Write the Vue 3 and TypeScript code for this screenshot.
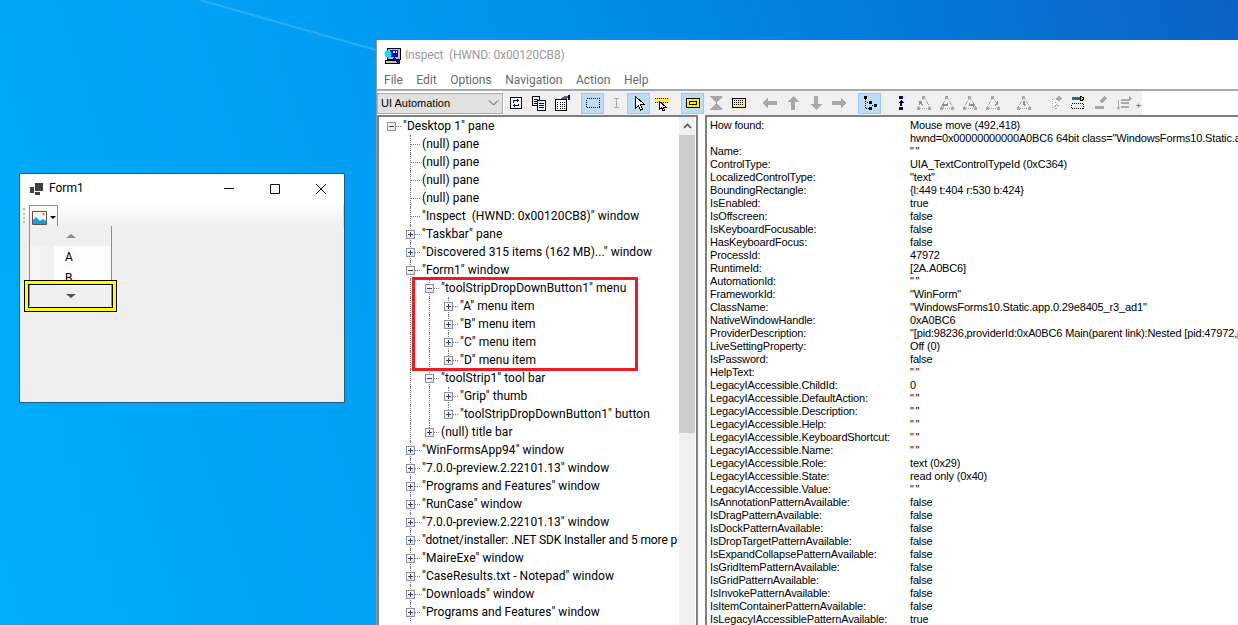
<template>
  <div class="desktop">
    <svg class="beam" width="400" height="60" viewBox="0 0 400 60">
      <path d="M200 0 L376 50" stroke="#4dbcf8" stroke-opacity="0.55" stroke-width="2" fill="none" />
    </svg>

    <div class="form-window">
      <div class="form-title">
        <svg class="form-icon" width="13" height="12" viewBox="0 0 13 12">
          <path d="M5 0h8v8H5z" fill="#3f3f3f" />
          <path d="M0 4h4v6H0z" fill="#3f3f3f" />
          <path d="M5 9h5v3H5z" fill="#3f3f3f" />
        </svg>
        <span class="form-name">Form1</span>
        <div class="caption-btns">
          <svg width="46" height="12" viewBox="0 0 46 12"><path d="M18 5.5h10" stroke="#111" /></svg>
          <svg width="46" height="12" viewBox="0 0 46 12"><path d="M18.5 1.5h9v9h-9z" stroke="#111" fill="none" /></svg>
          <svg width="46" height="12" viewBox="0 0 46 12"><path d="M18 1l10 10M28 1L18 11" stroke="#111" fill="none" /></svg>
        </div>
      </div>
      <div class="form-toolbar">
        <span class="grip"></span>
        <div class="drop-btn">
          <svg width="15" height="14" viewBox="0 0 15 14">
            <path d="M.5.5h14v13H.5z" fill="#f4f4f4" stroke="#555" />
            <path d="M1 13V9l3-3 4 4 3-2 3 2v3z" fill="#1d9be0" />
            <path d="M10 3h3M11.500 1.500v3" stroke="#e08a1e" />
          </svg>
          <span class="drop-arrow"></span>
        </div>
      </div>
      <div class="form-body"></div>

      <div class="menu">
        <div class="menu-scroll"><span class="tri-up"></span></div>
        <div class="menu-items">
          <div class="menu-item">A</div>
          <div class="menu-item">B</div>
        </div>
        <div class="menu-scroll"><span class="tri-down"></span></div>
      </div>
      <div class="hilite"></div>
    </div>

    <div class="inspect">
      <div class="ins-title">
        <svg width="17" height="17" viewBox="0 0 17 17" shape-rendering="crispEdges">
          <path d="M3 1h13v11H3z" fill="#c0c0c0" stroke="#000" />
          <path d="M6 3h8v7H6z" fill="#0000e0" />
          <path d="M9 4h2v2H9zM12 4h1v2h-1z" fill="#fff" />
          <path d="M1 13h14v3H1z" fill="#c0c0c0" stroke="#000" />
          <circle cx="4" cy="7" r="3.500" fill="#00e8f0" shape-rendering="auto" />
          <path d="M10 11l5 5" stroke="#0000e0" stroke-width="2" />
        </svg>
        <span>Inspect&nbsp; (HWND: 0x00120CB8)</span>
      </div>
      <div class="ins-menu">
        <span v-for="m in menus" :key="m">{{ m }}</span>
      </div>
      <div class="ins-tools">
        <div class="combo">
          <span>UI Automation</span>
          <svg width="11" height="6" viewBox="0 0 11 6"><path d="M1 .5l4.500 4.500L10 .5" stroke="#555" fill="none" /></svg>
        </div>
        <div class="tool-strip">
          <template v-for="(t, i) in tools" :key="i">
            <span v-if="t === '|'" class="tool-sep"></span>
            <span v-else class="tool" :class="{ on: selected.includes(t) }">
              <svg width="16" height="16" viewBox="0 0 16 16" shape-rendering="crispEdges">
                <path
                  v-for="(s, j) in icons[t]"
                  :key="j"
                  :d="s[0]"
                  :fill="s[1] || 'none'"
                  :stroke="s[2] || 'none'"
                  :stroke-dasharray="s[3]"
                />
              </svg>
            </span>
          </template>
          <span class="tool-more">+</span>
        </div>
      </div>

      <div class="panes">
        <div class="tree-pane">
          <div class="tree">
            <div v-for="(r, i) in rows" :key="i" class="row">
              <span
                v-for="g in r.guides"
                :key="g.x"
                class="vguide"
                :class="{ half: g.half }"
                :style="{ left: g.x + 'px' }"
              ></span>
              <span class="hguide" :style="{ left: r.cx + 'px' }"></span>
              <span
                v-if="r.exp"
                class="box"
                :class="{ plus: r.exp === '+' }"
                :style="{ left: r.cx - 4 + 'px' }"
              ></span>
              <span class="label" :class="{ tight: r.text.length > 45 }" :style="{ left: r.cx + 12 + 'px' }">{{ r.text }}</span>
            </div>
            <div class="red-box"></div>
          </div>
          <div class="vscroll">
            <div class="vs-btn">
              <svg width="9" height="6" viewBox="0 0 9 6"><path d="M1 5l3.500-3.500L8 5" stroke="#505050" stroke-width="1.600" fill="none" /></svg>
            </div>
            <div class="vs-thumb"></div>
          </div>
        </div>
        <div class="details">
          <div v-for="(d, i) in details" :key="i" class="d-row">
            <span>{{ d[0] }}</span>
            <span :class="{ empty: d[1] === '\u0022\u0022' }">{{ d[1] }}</span>
          </div>
        </div>
      </div>
    </div>
  </div>
</template>

<script setup lang="ts">
type Shape = [string, string?, string?, string?]

const menus = ['File', 'Edit', 'Options', 'Navigation', 'Action', 'Help']

const G = '#a8a8a8'

function triIcon(arrow: string): Shape[] {
  return [
    ['M6 1h3v3H6zM1 12h3v3H1zM12 12h3v3h-3z', G],
    ['M6.500 4L2.500 12M9.500 4l4 8M4 13.500h8', undefined, G, '1 1'],
    [arrow, '#909090'],
  ]
}

const icons: Record<string, Shape[]> = {
  refresh: [
    ['M2.500 2.500h11v11h-11z', '#fff', '#000'],
    ['M5.500 7.500v-2h4', undefined, '#0000a0'],
    ['M9 3.500l2 2-2 2z', '#0000a0'],
    ['M10.500 8.500v2h-4', undefined, '#0000a0'],
    ['M7 8.500l-2 2 2 2z', '#0000a0'],
  ],
  copy: [
    ['M1.500 1.500h7v9h-7z', '#fff', '#000'],
    ['M3 4h4M3 6h4M3 8h4', undefined, '#000'],
    ['M6.500 5.500h8v10h-8z', '#fff', '#000080'],
    ['M8 8h5M8 10h5M8 12h5', undefined, '#000080'],
  ],
  props: [
    ['M1.500 4.500h11v11h-11z', '#fff', '#000'],
    ['M3 7h2M6 7h5M3 9h2M6 9h5M3 11h2M6 11h5M3 13h2M6 13h5', undefined, '#000', '1 1'],
    ['M6 4l5-3h3v2l-3 1z', '#606060'],
    ['M14 0h2v5h-2z', '#000080'],
  ],
  dash: [['M1.500 3.500h13v9h-13z', 'none', '#000', '1 1']],
  ibeam: [['M5.500 3.500h5M8 3.500v9M5.500 12.500h5', undefined, G]],
  cursor: [['M4.500 1.500v12l3-3 2 4.500 2-1-2-4.500h4z', '#fff', '#000']],
  watch: [
    ['M1 3h14v5H1z', '#ffe85c'],
    ['M1 3.500h14M1 7.500h14', undefined, '#000', '1 1'],
    ['M5.500 6.500v8l2-2 1.500 3 1.500-.5-1.500-3h3z', '#fff', '#000'],
  ],
  rect: [
    ['M1 3h14v10H1z', '#000'],
    ['M2 4h12v8H2z', '#ffee00'],
    ['M4 6h8v4H4z', '#000'],
    ['M5 7h6v2H5z', '#ffee00'],
  ],
  hour: [
    ['M2 1h12v1l-6 6-6-6z', G],
    ['M8 8l6 6v1H2v-1z', G],
  ],
  keys: [
    ['M1.500 3.500h13v9h-13z', '#ffee66', '#000'],
    ['M3 5.500h10M3 7.500h10M3 9.500h10', undefined, '#000', '1 1'],
  ],
  left: [['M1 8l5-6v4h9v4H6v4z', G]],
  up: [['M8 1l6 6h-4v8H6V7H2z', G]],
  down: [['M8 15l6-6h-4V1H6v8H2z', G]],
  right: [['M15 8L10 2v4H1v4h9v4z', G]],
  tree: [
    ['M2 1h3v3H2zM7 6h3v3H7zM12 9h3v3h-3zM7 12h3v3H7z', '#000'],
    ['M3.500 4v9.500H7M5 7.500h2M10 10.500h2', undefined, '#000', '1 1'],
  ],
  nav: [
    ['M6 1h4v3H6zM6 12h4v3H6z', '#000080'],
    ['M8 5l3 3H9v3H7V8H5z', '#000'],
  ],
  t1: triIcon('M3 6l3 1-1 1 2 2-1 1-2-2-1 1z'),
  t2: triIcon('M2 10l3-2v1h3V8h1v3H5v1z'),
  t3: triIcon('M14 10l-3-2v1H8V8H7v3h4v1z'),
  t4: triIcon('M13 6l-3 1 1 1-2 2 1 1 2-2 1 1z'),
  t5: triIcon('M8 11l-2-2h1V6h2v3h1z'),
  star: [
    ['M5 4v9l2-2 1.500 3 1-.5L8 10.500h3z', '#fff', G, '1 1'],
    ['M8 4l4-3 3 2-3 3z', G],
  ],
  tag: [
    ['M2 2h8v3H2z', '#008080'],
    ['M10 1l4 2-2 3-2-1z', '#ffee00', '#000'],
    ['M1.500 8.500h12v5h-12z', 'none', '#000', '1 1'],
  ],
  lift: [
    ['M2 11h9v3H2z', G],
    ['M6 6l5-5 2 1 1 2-5 4z', G],
  ],
  list: [
    ['M5 4h8v2H5zM5 7h8v2H5zM5 11h8v2H5z', G],
    ['M13 1l3 2-3 3z', G],
    ['M2.500 5v9M1 12l1.500 2L4 12', undefined, G],
  ],
}

const tools = [
  'refresh', 'copy', 'props', '|',
  'dash', 'ibeam', 'cursor', 'watch', '|',
  'rect', 'hour', 'keys', '|',
  'left', 'up', 'down', 'right', '|',
  'tree', '|',
  'nav', 't1', 't2', 't3', 't4', '|',
  't5', '|',
  'star', 'tag', 'lift', 'list',
]
const selected = ['dash', 'cursor', 'rect', 'tree']

// depth, expander, text
const treeData: [number, string, string][] = [
  [0, '-', '"Desktop 1" pane'],
  [1, '', '(null) pane'],
  [1, '', '(null) pane'],
  [1, '', '(null) pane'],
  [1, '', '(null) pane'],
  [1, '', '"Inspect  (HWND: 0x00120CB8)" window'],
  [1, '+', '"Taskbar" pane'],
  [1, '+', '"Discovered 315 items (162 MB)..." window'],
  [1, '-', '"Form1" window'],
  [2, '-', '"toolStripDropDownButton1" menu'],
  [3, '+', '"A" menu item'],
  [3, '+', '"B" menu item'],
  [3, '+', '"C" menu item'],
  [3, '+', '"D" menu item'],
  [2, '-', '"toolStrip1" tool bar'],
  [3, '+', '"Grip" thumb'],
  [3, '+', '"toolStripDropDownButton1" button'],
  [2, '+', '(null) title bar'],
  [1, '+', '"WinFormsApp94" window'],
  [1, '+', '"7.0.0-preview.2.22101.13" window'],
  [1, '+', '"Programs and Features" window'],
  [1, '+', '"RunCase" window'],
  [1, '+', '"7.0.0-preview.2.22101.13" window'],
  [1, '+', '"dotnet/installer: .NET SDK Installer and 5 more p'],
  [1, '+', '"MaireExe" window'],
  [1, '+', '"CaseResults.txt - Notepad" window'],
  [1, '+', '"Downloads" window'],
  [1, '+', '"Programs and Features" window'],
]

function colX(depth: number) {
  return 12 + depth * 19
}

function continues(i: number, d: number) {
  for (let k = i + 1; k < treeData.length; k++) {
    if (treeData[k][0] === d) return true
    if (treeData[k][0] < d) return false
  }
  // the top level list goes on below the window
  return d === 1
}

const rows = treeData.map(([depth, exp, text], i) => {
  const guides: { x: number; half: boolean }[] = []
  for (let d = 1; d <= depth; d++) {
    if (d === depth) guides.push({ x: colX(d), half: !continues(i, d) })
    else if (continues(i, d)) guides.push({ x: colX(d), half: false })
  }
  return { cx: colX(depth), exp, text, guides }
})

const details: [string, string][] = [
  ['How found:', 'Mouse move (492,418)'],
  ['', 'hwnd=0x00000000000A0BC6 64bit class="WindowsForms10.Static.app.0.29e8405_r3_ad1"'],
  ['Name:', '""'],
  ['ControlType:', 'UIA_TextControlTypeId (0xC364)'],
  ['LocalizedControlType:', '"text"'],
  ['BoundingRectangle:', '{l:449 t:404 r:530 b:424}'],
  ['IsEnabled:', 'true'],
  ['IsOffscreen:', 'false'],
  ['IsKeyboardFocusable:', 'false'],
  ['HasKeyboardFocus:', 'false'],
  ['ProcessId:', '47972'],
  ['RuntimeId:', '[2A.A0BC6]'],
  ['AutomationId:', '""'],
  ['FrameworkId:', '"WinForm"'],
  ['ClassName:', '"WindowsForms10.Static.app.0.29e8405_r3_ad1"'],
  ['NativeWindowHandle:', '0xA0BC6'],
  ['ProviderDescription:', '"[pid:98236,providerId:0xA0BC6 Main(parent link):Nested [pid:47972,providerId:0xA0BC6]"'],
  ['LiveSettingProperty:', 'Off (0)'],
  ['IsPassword:', 'false'],
  ['HelpText:', '""'],
  ['LegacyIAccessible.ChildId:', '0'],
  ['LegacyIAccessible.DefaultAction:', '""'],
  ['LegacyIAccessible.Description:', '""'],
  ['LegacyIAccessible.Help:', '""'],
  ['LegacyIAccessible.KeyboardShortcut:', '""'],
  ['LegacyIAccessible.Name:', '""'],
  ['LegacyIAccessible.Role:', 'text (0x29)'],
  ['LegacyIAccessible.State:', 'read only (0x40)'],
  ['LegacyIAccessible.Value:', '""'],
  ['IsAnnotationPatternAvailable:', 'false'],
  ['IsDragPatternAvailable:', 'false'],
  ['IsDockPatternAvailable:', 'false'],
  ['IsDropTargetPatternAvailable:', 'false'],
  ['IsExpandCollapsePatternAvailable:', 'false'],
  ['IsGridItemPatternAvailable:', 'false'],
  ['IsGridPatternAvailable:', 'false'],
  ['IsInvokePatternAvailable:', 'false'],
  ['IsItemContainerPatternAvailable:', 'false'],
  ['IsLegacyIAccessiblePatternAvailable:', 'true'],
]
</script>

<style>
html,
body {
  margin: 0;
  overflow: hidden;
}
</style>

<style scoped>
.desktop {
  position: relative;
  width: 1238px;
  height: 625px;
  overflow: hidden;
  background: linear-gradient(72deg, #00aefc 0%, #009ef4 35%, #0088e4 62%, #0b62c4 100%);
  font-family: Roboto, "Open Sans", sans-serif;
  color: #000;
}

.beam {
  position: absolute;
  left: 0;
  top: 0;
}

/* Form1 */
.form-window {
  position: absolute;
  left: 19px;
  top: 173px;
  width: 326px;
  height: 230px;
  box-sizing: border-box;
  border: 1px solid #1d5c85;
  background: #efefef;
  display: flex;
  flex-direction: column;
}

.form-title {
  height: 30px;
  background: #fff;
  display: flex;
  align-items: center;
  flex-shrink: 0;
}

.form-icon {
  margin-left: 10px;
}

.form-name {
  margin-left: 6px;
  margin-bottom: 2px;
  font-size: 12px;
}

.caption-btns {
  margin-left: auto;
  display: flex;
}

.form-toolbar {
  height: 23px;
  flex-shrink: 0;
  background: linear-gradient(#fff, #efefef);
  border-right: 1px solid #dcdcdc;
  display: flex;
  align-items: flex-start;
}

.grip {
  width: 0;
  height: 15px;
  margin: 4px 0 0 3px;
  border-left: 2px dotted #c0c0c0;
}

.drop-btn {
  box-sizing: border-box;
  width: 29px;
  height: 22px;
  margin: 1px 0 0 4px;
  border: 1px solid #8c8c8c;
  border-bottom: 0;
  display: flex;
  align-items: center;
  padding: 2px 0 0 2px;
  gap: 3px;
}

.drop-arrow {
  width: 0;
  height: 0;
  border: 3px solid transparent;
  border-top: 3px solid #000;
  border-bottom: 0;
}

.form-body {
  flex: 1;
}

.menu {
  position: absolute;
  left: 9px;
  top: 52px;
  width: 83px;
  height: 80px;
  box-sizing: border-box;
  border: 1px solid #8c8c8c;
  border-width: 0 1px;
  background: #efefef;
  display: flex;
  flex-direction: column;
}

.menu-scroll {
  height: 20px;
  display: flex;
  align-items: center;
  justify-content: center;
  flex-shrink: 0;
}

.tri-up,
.tri-down {
  width: 0;
  height: 0;
  border: 5px solid transparent;
}

.tri-up {
  border-bottom: 4px solid #8c8c8c;
  border-top: 0;
}

.tri-down {
  border-top: 4px solid #505050;
  border-bottom: 0;
}

.menu-items {
  flex: 1;
  overflow: hidden;
  background: linear-gradient(90deg, #f6f6f6 0, #f0f0f0 24px, #fcfcfc 24px);
  padding-top: 1px;
}

.menu-item {
  height: 21px;
  line-height: 21px;
  padding-left: 35px;
  font-size: 12px;
}

.hilite {
  position: absolute;
  left: 4px;
  top: 106px;
  width: 93px;
  height: 32px;
  box-sizing: border-box;
  border: 1px solid #000;
  outline: 3px solid #ffff00;
  outline-offset: -4px;
}

.hilite::after {
  content: "";
  position: absolute;
  inset: 3px;
  border: 1px solid #000;
}

/* Inspect */
.inspect {
  position: absolute;
  left: 376px;
  top: 40px;
  width: 862px;
  height: 585px;
  box-sizing: border-box;
  border-left: 1px solid #8a9aa6;
  background: #fff;
  display: flex;
  flex-direction: column;
}

.ins-title {
  height: 30px;
  display: flex;
  align-items: center;
  padding-left: 7px;
  gap: 4px;
  font-size: 12px;
  letter-spacing: -0.15px;
  color: #9a9a9a;
}

.ins-menu {
  height: 19px;
  display: flex;
  align-items: center;
  gap: 13.5px;
  padding-left: 7px;
  font-size: 12px;
  color: #6a6a6a;
  border-bottom: 2px solid #a8a8a8;
}

.ins-tools {
  height: 24px;
  display: flex;
  align-items: center;
}

.combo {
  box-sizing: border-box;
  width: 126px;
  height: 21px;
  background: #e1e1e1;
  border: 1px solid #adadad;
  display: flex;
  align-items: center;
  justify-content: space-between;
  padding: 0 3px;
  font-family: "Liberation Sans", Arial, sans-serif;
  font-size: 11px;
}

.tool-strip {
  margin-left: 1px;
  height: 24px;
  width: 638px;
  background: #f0f0f0;
  display: flex;
  align-items: center;
}

.tool {
  box-sizing: border-box;
  width: 23px;
  height: 21px;
  display: flex;
  align-items: center;
  justify-content: center;
  flex-shrink: 0;
}

.tool.on {
  background: #bddcf5;
  border: 1px solid #94cbf7;
}

.tool-sep {
  width: 8px;
  flex-shrink: 0;
}

.tool-more {
  font-size: 9px;
  color: #777;
  margin: 6px 0 0 1px;
}

.panes {
  flex: 1;
  display: flex;
  min-height: 0;
}

.tree-pane {
  box-sizing: border-box;
  width: 321px;
  border: 2px solid #808080;
  border-bottom: 0;
  display: flex;
  background: #fff;
}

.tree {
  position: relative;
  width: 300px;
  overflow: hidden;
  font-size: 12px;
  letter-spacing: 0.05px;
}

.row {
  position: relative;
  height: 18px;
}

.vguide {
  position: absolute;
  top: 0;
  bottom: 0;
  border-left: 1px dotted #7c7c7c;
}

.vguide.half {
  bottom: 9px;
}

.hguide {
  position: absolute;
  top: 9px;
  width: 10px;
  border-top: 1px dotted #7c7c7c;
}

.box {
  position: absolute;
  top: 5px;
  box-sizing: border-box;
  width: 9px;
  height: 9px;
  border: 1px solid #929292;
  background: linear-gradient(135deg, #fff, #dfe3ea);
}

.box::before {
  content: "";
  position: absolute;
  left: 1px;
  right: 1px;
  top: 3px;
  height: 1px;
  background: #34407a;
}

.box.plus::after {
  content: "";
  position: absolute;
  top: 1px;
  bottom: 1px;
  left: 3px;
  width: 1px;
  background: #34407a;
}

.label {
  position: absolute;
  top: 0;
  line-height: 18px;
  white-space: pre;
}

.label.tight {
  letter-spacing: -0.12px;
}

.red-box {
  position: absolute;
  left: 33px;
  top: 160px;
  width: 226px;
  height: 94px;
  box-sizing: border-box;
  border: 3px solid #ed1c24;
}

.vscroll {
  width: 16px;
  background: #f0f0f0;
  display: flex;
  flex-direction: column;
}

.vs-btn {
  height: 18px;
  display: flex;
  align-items: center;
  justify-content: center;
}

.vs-thumb {
  height: 298px;
  background: #cdcdcd;
}

.details {
  box-sizing: border-box;
  margin-left: 7px;
  flex: 1;
  min-width: 0;
  overflow: hidden;
  border: 2px solid #808080;
  border-width: 2px 0 0 2px;
  padding: 2px 0 0 3px;
  font-family: "Liberation Sans", Arial, sans-serif;
  font-size: 11px;
  letter-spacing: -0.15px;
}

.d-row {
  display: grid;
  grid-template-columns: 200px auto;
  height: 13px;
  line-height: 13px;
  white-space: nowrap;
}

.empty {
  letter-spacing: 1.5px;
}
</style>
